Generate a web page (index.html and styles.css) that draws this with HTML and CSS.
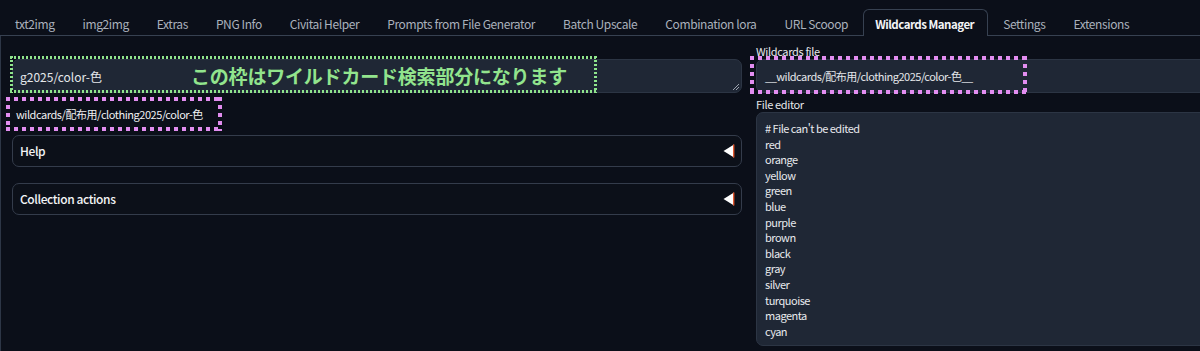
FILE: index.html
```html
<!DOCTYPE html>
<html lang="ja">
<head>
<meta charset="utf-8">
<title>Wildcards Manager</title>
<link rel="stylesheet" href="styles.css">
</head>
<body>
<div class="app">
  <nav class="tab-nav">
    <button class="tab">txt2img</button>
    <button class="tab">img2img</button>
    <button class="tab">Extras</button>
    <button class="tab">PNG Info</button>
    <button class="tab">Civitai Helper</button>
    <button class="tab">Prompts from File Generator</button>
    <button class="tab">Batch Upscale</button>
    <button class="tab">Combination lora</button>
    <button class="tab">URL Scooop</button>
    <button class="tab active">Wildcards Manager</button>
    <button class="tab">Settings</button>
    <button class="tab">Extensions</button>
  </nav>
  <section class="panel">
    <div class="col col-left">
      <div class="textbox search">
        <span class="value">g2025/color-色</span>
        <span class="resize"></span>
        <div class="note note-green"><span class="note-text">この枠はワイルドカード検索部分になります</span></div>
      </div>
      <div class="result dots-pink">wildcards/配布用/clothing2025/color-色</div>
      <div class="accordion first">
        <span class="acc-title">Help</span>
        <svg class="acc-icon" width="12" height="14" viewBox="0 0 12 14"><polygon points="11,0.5 11,13.5 0.5,7" fill="#ffffff"/><rect x="10" y="0.5" width="1.4" height="13" fill="#e4572e"/></svg>
      </div>
      <div class="accordion">
        <span class="acc-title">Collection actions</span>
        <svg class="acc-icon" width="12" height="14" viewBox="0 0 12 14"><polygon points="11,0.5 11,13.5 0.5,7" fill="#ffffff"/><rect x="10" y="0.5" width="1.4" height="13" fill="#e4572e"/></svg>
      </div>
    </div>
    <div class="col col-right">
      <label class="label">Wildcards file</label>
      <div class="textbox file">
        <span class="value">__wildcards/配布用/clothing2025/color-色__</span>
        <div class="note note-pink"></div>
      </div>
      <label class="label">File editor</label>
      <div class="editor">
        <div># File can't be edited</div>
        <div>red</div>
        <div>orange</div>
        <div>yellow</div>
        <div>green</div>
        <div>blue</div>
        <div>purple</div>
        <div>brown</div>
        <div>black</div>
        <div>gray</div>
        <div>silver</div>
        <div>turquoise</div>
        <div>magenta</div>
        <div>cyan</div>
      </div>
    </div>
  </section>
</div>
</body>
</html>
```

FILE: styles.css
```css
html, body {
  margin: 0;
  padding: 0;
  background: #0b0f19;
  overflow: hidden;
}
body {
  width: 1200px;
  height: 351px;
  font-family: "Noto Sans CJK JP", "Noto Sans", sans-serif;
  color: #e5e7eb;
}
.app {
  width: 1500px;
}
.tab-nav {
  display: flex;
  align-items: flex-end;
  height: 35px;
  padding-left: 2px;
  border-bottom: 1px solid #374151;
  box-sizing: content-box;
}
.tab {
  height: 26px;
  margin-right: 2px;
  padding: 2px 12px 0;
  border: 1px solid transparent;
  border-bottom: none;
  border-radius: 6px 6px 0 0;
  background: transparent;
  color: #aab1bc;
  font-family: inherit;
  font-size: 12px;
  letter-spacing: -0.4px;
  line-height: 24px;
  white-space: nowrap;
  cursor: pointer;
}
.tab.active {
  border-color: #374151;
  background: #0b0f19;
  color: #f3f4f6;
  font-weight: 700;
  font-size: 11.5px;
  letter-spacing: -0.5px;
  margin-bottom: -1px;
  height: 27px;
  padding: 2px 13px 1px 11px;
}
.panel {
  display: grid;
  grid-template-columns: 730px 730px;
  column-gap: 14px;
  padding: 8px 11px 0;
  border-left: 1px solid #2d3646;
  height: 320px;
  box-sizing: border-box;
}
.col-left {
  padding-top: 15px;
  display: flex;
  flex-direction: column;
}
.textbox {
  position: relative;
  height: 34px;
  box-sizing: border-box;
  background: #1f2735;
  border: 1px solid #2c3544;
  border-radius: 7px;
  display: flex;
  align-items: center;
  padding-left: 7px;
  font-size: 12px;
  color: #e5e7eb;
  white-space: nowrap;
}
.resize {
  position: absolute;
  right: 2px;
  bottom: 2px;
  width: 6px;
  height: 6px;
  background: linear-gradient(135deg, transparent 0 45%, #9ca3af 45% 55%, transparent 55% 70%, #9ca3af 70% 80%, transparent 80%);
}
.note {
  position: absolute;
}
.note-green {
  left: -3px;
  top: -4px;
  width: 587px;
  height: 37px;
  box-sizing: border-box;
  --c: #8fe48c;
  background:
    repeating-linear-gradient(90deg, var(--c) 0 2px, transparent 2px 4px) left top / 100% 3px no-repeat,
    repeating-linear-gradient(90deg, var(--c) 0 2px, transparent 2px 4px) left bottom / 100% 3px no-repeat,
    repeating-linear-gradient(180deg, var(--c) 0 2px, transparent 2px 4px) left top / 3px 100% no-repeat,
    repeating-linear-gradient(180deg, var(--c) 0 2px, transparent 2px 4px) right top / 3px 100% no-repeat;
  display: flex;
  align-items: center;
  padding-left: 181px;
}
.note-text {
  color: #92e48d;
  font-size: 19px;
  font-weight: 700;
  letter-spacing: -0.2px;
  line-height: 22px;
  padding-top: 3px;
}
.dots-pink, .note-pink {
  --c: #e28df0;
  background:
    repeating-linear-gradient(90deg, var(--c) 0 4px, transparent 4px 8px) left top / 100% 4px no-repeat,
    repeating-linear-gradient(90deg, var(--c) 0 4px, transparent 4px 8px) left bottom / 100% 4px no-repeat,
    repeating-linear-gradient(180deg, var(--c) 0 4px, transparent 4px 8px) left top / 4px 100% no-repeat,
    repeating-linear-gradient(180deg, var(--c) 0 4px, transparent 4px 8px) right top / 4px 100% no-repeat;
}
.result {
  align-self: flex-start;
  margin: 4px 0 0 -6px;
  height: 34px;
  width: 216px;
  box-sizing: border-box;
  padding-left: 10px;
  display: flex;
  align-items: center;
  font-size: 11px;
  letter-spacing: -0.45px;
  white-space: nowrap;
  color: #f0f1f3;
}
.accordion {
  height: 32px;
  box-sizing: border-box;
  border: 1px solid #343c4b;
  border-radius: 7px;
  background: #0c1019;
  display: flex;
  align-items: center;
  justify-content: space-between;
  padding: 0 6px 1px 7px;
  margin-top: 16px;
}
.accordion.first {
  margin-top: 4px;
}
.acc-title {
  font-size: 12px;
  font-weight: 500;
  letter-spacing: -0.4px;
  color: #f3f4f6;
}
.acc-icon {
  display: block;
}
.label {
  display: block;
  height: 15px;
  font-size: 11px;
  letter-spacing: -0.35px;
  line-height: 15px;
  color: #e5e7eb;
}
.textbox.file {
  margin-bottom: 4px;
  padding-left: 8px;
  font-size: 11px;
  letter-spacing: -0.5px;
}
.note-pink {
  left: -7px;
  top: -4px;
  width: 277px;
  height: 38px;
}
.editor {
  height: 234px;
  box-sizing: border-box;
  background: #1f2735;
  border: 1px solid #2c3544;
  border-radius: 7px;
  padding: 8px 8px 0;
  font-size: 11px;
  letter-spacing: -0.5px;
  line-height: 15.6px;
  color: #e8eaee;
}
```
